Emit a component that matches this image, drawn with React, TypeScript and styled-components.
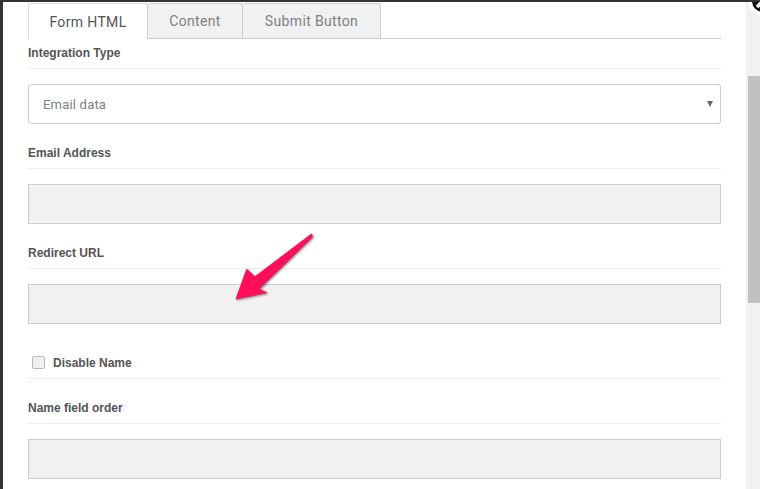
import styled, { createGlobalStyle } from "styled-components";

const GlobalStyle = createGlobalStyle`
    html, body {
        margin: 0;
        padding: 0;
        height: 489px;
        overflow: hidden;
        background: white;
        font-family: "Liberation Sans", Arial, sans-serif;
    }
`;

const fields = [
    { id: "email", label: "Email Address" },
    { id: "redirect", label: "Redirect URL" },
];

export default function App() {
    return (
        <Page>
            <GlobalStyle />
            <Panel>
                <Tabs>
                    <Tab $active $width={120}>Form HTML</Tab>
                    <Tab $width={95}>Content</Tab>
                    <Tab $width={138}>Submit Button</Tab>
                </Tabs>
                <Group $first>
                    <Label>Integration Type</Label>
                    <SelectBox>
                        Email data
                        <Caret />
                    </SelectBox>
                </Group>
                {fields.map((field) => (
                    <Group key={field.id}>
                        <Label>{field.label}</Label>
                        <DisabledInput />
                    </Group>
                ))}
                <CheckRow>
                    <CheckBox />
                    Disable Name
                </CheckRow>
                <Group>
                    <Label>Name field order</Label>
                    <DisabledInput />
                </Group>
                <Arrow viewBox="0 0 84 74" aria-hidden="true">
                    <path
                        d="M79.5 4 L80.5 7 L27 59 L34.7 62.7 L4 69 L14.7 39.3 L23 46.7 Z"
                        fill="#ff0f5a"
                        stroke="#ff0f5a"
                        strokeWidth="1"
                        strokeLinejoin="round"
                    />
                </Arrow>
            </Panel>
            <Scrollbar>
                <Thumb />
            </Scrollbar>
            <CloseBadge viewBox="0 0 30 30" aria-hidden="true">
                <circle cx="15" cy="15" r="13" fill="#111" stroke="white" strokeWidth="4" />
                <path d="M9 9 L21 21 M21 9 L9 21" stroke="white" strokeWidth="3.5" />
            </CloseBadge>
        </Page>
    );
}

const Page = styled.div`
    position: relative;
    width: 760px;
    height: 489px;
    display: flex;
    overflow: hidden;
    box-sizing: border-box;
    border-top: 2px solid #333;
    border-left: 3px solid #333;
    background: white;
`;

const Panel = styled.div`
    position: relative;
    width: 743px;
    padding: 1px 25px 0;
    box-sizing: border-box;
`;

const Tabs = styled.div`
    display: flex;
    height: 36px;
    box-sizing: border-box;
    border-bottom: 1px solid #ccc;
`;

const Tab = styled.div<{ $active?: boolean; $width: number }>`
    width: ${(props) => props.$width}px;
    height: 36px;
    box-sizing: border-box;
    display: flex;
    align-items: center;
    justify-content: center;
    font-family: Roboto, "Liberation Sans", sans-serif;
    font-size: 14px;
    letter-spacing: 0.35px;
    color: ${(props) => (props.$active ? "#555" : "#808080")};
    background: ${(props) => (props.$active ? "white" : "#f1f1f1")};
    border: 1px solid #ccc;
    border-top-color: ${(props) => (props.$active ? "#ddd" : "#ccc")};
    border-left-color: ${(props) => (props.$active ? "#ddd" : "#ccc")};
    border-left-width: ${(props) => (props.$active ? "1px" : "0")};
    border-bottom: ${(props) => (props.$active ? "none" : "1px solid #ccc")};
    border-radius: 3px 3px 0 0;
`;

const Group = styled.div<{ $first?: boolean }>`
    margin-top: ${(props) => (props.$first ? "0" : "15px")};
`;

const Label = styled.div`
    height: 30px;
    box-sizing: border-box;
    display: flex;
    align-items: center;
    padding-bottom: 1px;
    border-bottom: 1px solid #eee;
    margin-bottom: 15px;
    font-family: "Liberation Sans", Arial, sans-serif;
    font-size: 12px;
    font-weight: 700;
    color: #555;
`;

const SelectBox = styled.div`
    position: relative;
    height: 40px;
    box-sizing: border-box;
    display: flex;
    align-items: center;
    padding-left: 14px;
    border: 1px solid #ccc;
    border-radius: 3px;
    font-family: Roboto, "Liberation Sans", sans-serif;
    font-size: 13px;
    letter-spacing: 0.2px;
    color: #808080;
`;

const Caret = styled.span`
    position: absolute;
    right: 7px;
    top: 16px;
    border-left: 3px solid transparent;
    border-right: 3px solid transparent;
    border-top: 6px solid #666;
`;

const DisabledInput = styled.div`
    height: 40px;
    box-sizing: border-box;
    background: #f1f1f1;
    border: 1px solid #ccc;
`;

const CheckRow = styled.div`
    height: 55px;
    box-sizing: border-box;
    display: flex;
    align-items: flex-end;
    gap: 8px;
    padding: 0 0 8px 4px;
    border-bottom: 1px solid #eee;
    font-size: 12px;
    font-weight: 700;
    color: #555;
`;

const CheckBox = styled.span`
    width: 13px;
    height: 13px;
    box-sizing: border-box;
    margin-bottom: 1px;
    background: #f0f0f0;
    border: 1px solid #bbb;
    border-radius: 2px;
`;

const Arrow = styled.svg`
    position: absolute;
    left: 229px;
    top: 228px;
    width: 84px;
    height: 74px;
    filter: drop-shadow(1px 1px 1px rgba(0, 0, 0, 0.45));
`;

const Scrollbar = styled.div`
    width: 14px;
    height: 100%;
    padding: 74px 0 0 2px;
    box-sizing: border-box;
    background: #f1f1f1;
`;

const Thumb = styled.div`
    width: 12px;
    height: 227px;
    background: #c1c1c1;
`;

const CloseBadge = styled.svg`
    position: absolute;
    left: 745px;
    top: -16px;
    width: 30px;
    height: 30px;
`;
